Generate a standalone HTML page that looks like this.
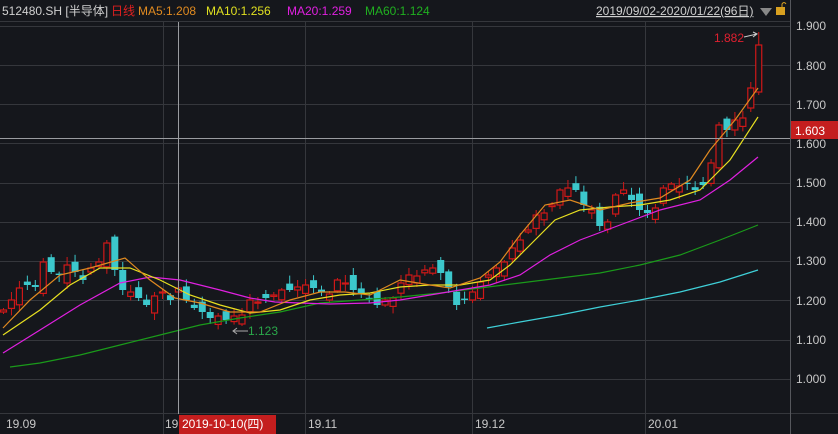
<!DOCTYPE html>
<html><head><meta charset="utf-8"><style>
body{margin:0;background:#15171c;width:838px;height:434px;overflow:hidden;font-family:"Liberation Sans","Noto Sans CJK SC",sans-serif}
svg{position:absolute;left:0;top:0}
</style></head><body>
<svg id="s" width="838" height="434" xmlns="http://www.w3.org/2000/svg">
<rect width="838" height="434" fill="#15171c"/>
<g stroke="#35373c" stroke-width="1">
<line x1="0" y1="26.5" x2="790" y2="26.5"/><line x1="0" y1="65.5" x2="790" y2="65.5"/>
<line x1="0" y1="104.5" x2="790" y2="104.5"/><line x1="0" y1="143.5" x2="790" y2="143.5"/>
<line x1="0" y1="183.5" x2="790" y2="183.5"/><line x1="0" y1="222.5" x2="790" y2="222.5"/>
<line x1="0" y1="261.5" x2="790" y2="261.5"/><line x1="0" y1="300.5" x2="790" y2="300.5"/>
<line x1="0" y1="340.5" x2="790" y2="340.5"/><line x1="0" y1="379.5" x2="790" y2="379.5"/>
<line x1="163.5" y1="22" x2="163.5" y2="434"/><line x1="305.5" y1="22" x2="305.5" y2="434"/>
<line x1="472.5" y1="22" x2="472.5" y2="434"/><line x1="645.5" y1="22" x2="645.5" y2="434"/>
<line x1="0" y1="413.5" x2="838" y2="413.5"/><line x1="0" y1="21.5" x2="790" y2="21.5"/>
</g>
<line x1="790.5" y1="0" x2="790.5" y2="434" stroke="#55575c"/>
<g id="c"></g>
<g fill="none" stroke-width="1.2">
<polyline stroke="#3fd0d8" points="487,328 520,322 560,315 600,307 640,300 680,292 720,282 758,270"/>
<polyline stroke="#1a9a1a" points="10,367 40,363 80,355 120,345 160,335 200,325 240,318 280,312 320,303 360,300 400,297 440,293 480,288 520,283 560,278 600,273 640,265 680,255 720,240 758,225"/>
<polyline stroke="#e020e0" points="3,353 40,330 80,305 120,283 150,277 180,280 220,290 250,298 275,302 300,303 330,304 370,303 400,300 430,295 460,290 490,285 520,275 550,255 580,240 620,225 660,210 700,200 730,180 758,157"/>
<polyline stroke="#e8e020" points="3,335 40,310 70,285 100,268 130,268 160,280 190,295 220,305 250,313 280,310 310,300 340,295 370,293 400,287 430,285 460,285 490,280 510,265 530,245 555,220 580,210 610,207 640,205 670,200 700,190 730,160 758,117"/>
<polyline stroke="#e08a20" points="3,328 30,300 60,275 90,268 125,258 150,280 175,298 200,303 230,312 260,312 290,300 320,292 345,292 370,295 400,280 430,285 450,288 480,278 500,262 520,235 545,205 570,200 600,210 630,203 660,198 690,180 710,150 735,120 758,88"/>
</g>
<line x1="178.5" y1="22" x2="178.5" y2="414" stroke="#9a9ca0"/>
<line x1="0" y1="138.5" x2="790" y2="138.5" stroke="#9a9ca0"/>
<rect x="791" y="121" width="47" height="18" fill="#c41e1e"/>
<text x="795" y="135" fill="#fff" font-size="12">1.603</text>
<g fill="#c8c8c8" font-size="12">
<text x="796" y="30">1.900</text><text x="796" y="70">1.800</text><text x="796" y="109">1.700</text>
<text x="796" y="148">1.600</text><text x="796" y="187">1.500</text><text x="796" y="226">1.400</text>
<text x="796" y="265">1.300</text><text x="796" y="305">1.200</text><text x="796" y="344">1.100</text>
<text x="796" y="383">1.000</text>
<text x="6" y="428">19.09</text><text x="165" y="428">19</text><text x="308" y="428">19.11</text>
<text x="475" y="428">19.12</text><text x="648" y="428">20.01</text>
</g>
<rect x="179" y="415" width="97" height="19" fill="#c41e1e"/>
<text x="182" y="428" fill="#fff" font-size="12">2019-10-10(四)</text>
<text x="714" y="42" fill="#e02030" font-size="12">1.882</text>
<path d="M744 37 L757 34 M753 32 L757 34 L753 37" stroke="#ccc" fill="none"/>
<path d="M233 331 H248 M237 328 L233 331 L237 334" stroke="#aaa" fill="none"/>
<text x="248" y="335" fill="#2aa84a" font-size="12">1.123</text>
<g font-size="12">
<text x="2" y="15" fill="#d0d0d0">512480.SH [半导体]</text>
<text x="111" y="15" fill="#e02020">日线</text>
<text x="138" y="15" fill="#e08a20">MA5:1.208</text>
<text x="206" y="15" fill="#e0e020">MA10:1.256</text>
<text x="287" y="15" fill="#e020e0">MA20:1.259</text>
<text x="365" y="15" fill="#20b020">MA60:1.124</text>
<text x="596" y="15" fill="#d0d0d0" text-decoration="underline">2019/09/02-2020/01/22(96日)</text>
</g>
<path d="M760 8 L772 8 L766 16 Z" fill="#888"/>
<rect x="776" y="7" width="9" height="8" fill="#d8a020"/>
<path d="M782 7 V4 Q784 1 786 4" stroke="#d8a020" fill="none"/>
</svg>
<script>
var C=[310,300,288,285,287,262,272,275,265,272,280,268,262,243,270,290,292,298,305,296,292,300,288,300,308,312,318,316,320,316,315,300,302,298,295,290,290,287,285,288,292,294,280,283,290,293,298,305,300,298,283,275,276,270,268,273,287,305,300,292,282,275,268,262,248,240,230,215,213,205,190,188,190,205,210,226,222,195,190,200,210,213,208,188,184,186,184,190,185,163,125,130,120,118,88,45];
var g=document.getElementById('c'),h='',p=320;
for(var i=0;i<C.length;i++){var x=3+7.95*i,c=C[i],o=p+((i*37)%11-5)*1.6;
if(i==95)o=92;if(i==94)o=108;
var t=Math.min(o,c),b=Math.max(o,c);if(b-t<1)b=t+1;
var hi=t-2-(i*13)%7,lo=b+2+(i*11)%6;if(i==95)hi=32;
var up=c<o;var col=up?'#d01818':'#3cc8cc';
h+='<line x1="'+(x+.5)+'" y1="'+hi+'" x2="'+(x+.5)+'" y2="'+lo+'" stroke="'+col+'"/>';
if(up)h+='<rect x="'+(x-2.5)+'" y="'+t+'" width="6" height="'+(b-t)+'" fill="#15171c" stroke="'+col+'" stroke-width="1.2"/>';
else h+='<rect x="'+(x-3)+'" y="'+t+'" width="7" height="'+(b-t)+'" fill="'+col+'"/>';
p=c;}
g.innerHTML=h;
</script>
</body></html>
